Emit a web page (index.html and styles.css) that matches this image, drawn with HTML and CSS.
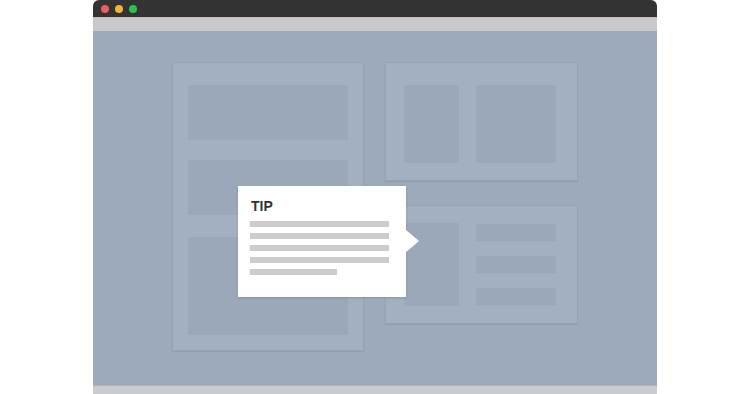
FILE: index.html
```html
<!DOCTYPE html>
<html>
<head>
<meta charset="utf-8">
<link rel="stylesheet" href="styles.css">
</head>
<body>
<div class="window">
  <div class="titlebar">
    <span class="dot red"></span>
    <span class="dot yellow"></span>
    <span class="dot green"></span>
  </div>
  <div class="toolbar"></div>
  <div class="content">
    <div class="grid">
      <div class="card card-left">
        <div class="block b1"></div>
        <div class="block b2"></div>
        <div class="block b3"></div>
      </div>
      <div class="right">
        <div class="card card-rt">
          <div class="block narrow"></div>
          <div class="block wide"></div>
        </div>
        <div class="card card-rb">
          <div class="block narrow"></div>
          <div class="rows">
            <div class="block row"></div>
            <div class="block row"></div>
            <div class="block row"></div>
          </div>
        </div>
      </div>
    </div>
    <div class="tip">
      <div class="tip-title">TIP</div>
      <div class="lines">
        <div class="line"></div>
        <div class="line"></div>
        <div class="line"></div>
        <div class="line"></div>
        <div class="line short"></div>
      </div>
      <div class="arrow"></div>
    </div>
  </div>
  <div class="footer"></div>
</div>
</body>
</html>
```

FILE: styles.css
```css
html, body {
  margin: 0;
  padding: 0;
  background: #ffffff;
  font-family: "Liberation Sans", Arial, sans-serif;
}
.window {
  margin-left: 93px;
  width: 564px;
  height: 394px;
  display: flex;
  flex-direction: column;
}
.titlebar {
  height: 17px;
  background: #333333;
  border-radius: 6px 6px 0 0;
  display: flex;
  align-items: center;
  padding-left: 8px;
  gap: 6px;
}
.dot {
  width: 8px;
  height: 8px;
  border-radius: 50%;
}
.red { background: #f25c5c; }
.yellow { background: #f5b433; }
.green { background: #2fc24a; }
.toolbar {
  height: 14px;
  background: #c9c9c9;
  border-top: 1px solid #bdbdbd;
  box-sizing: border-box;
}
.content {
  position: relative;
  flex: 1;
  background: #9caabb;
  padding: 31px 0 0 79px;
}
.footer {
  height: 9px;
  background: #cbcbcb;
  border-top: 1px solid #b3b3b3;
  box-sizing: border-box;
}
.grid {
  display: flex;
  gap: 21px;
}
.card {
  background: #a2b0c1;
  border: 1px solid #95a3b4;
  box-sizing: border-box;
  box-shadow: 0 1px 1px rgba(80, 95, 115, 0.15);
}
.block {
  background: #9aa8b9;
}
.card-left {
  width: 192px;
  height: 289px;
  padding: 22px 15px 15px;
  display: flex;
  flex-direction: column;
}
.b1 { height: 55px; }
.b2 { height: 55px; margin-top: 20px; }
.b3 { height: 98px; margin-top: 22px; }
.right {
  display: flex;
  flex-direction: column;
  gap: 24px;
}
.card-rt, .card-rb {
  width: 193px;
  height: 119px;
  display: flex;
  gap: 17px;
  padding: 22px 21px 17px 18px;
}
.card-rb {
  padding-top: 17px;
}
.narrow { width: 55px; }
.wide { flex: 1; }
.rows {
  flex: 1;
  display: flex;
  flex-direction: column;
  gap: 15px;
  padding-top: 1px;
}
.row { height: 17px; }
.tip {
  position: absolute;
  left: 145px;
  top: 155px;
  width: 168px;
  height: 111px;
  box-sizing: border-box;
  background: #ffffff;
  padding: 12px 17px 0 12px;
  box-shadow: 0 1px 2px rgba(60, 70, 90, 0.25);
}
.tip-title {
  font-size: 14px;
  font-weight: bold;
  color: #333333;
  line-height: 16px;
  padding-left: 1px;
}
.lines {
  margin-top: 7px;
  display: flex;
  flex-direction: column;
  gap: 6px;
}
.line {
  height: 6px;
  background: #cccccc;
}
.line.short { width: 87px; }
.arrow {
  position: absolute;
  right: -13px;
  top: 44px;
  width: 0;
  height: 0;
  border-top: 11px solid transparent;
  border-bottom: 11px solid transparent;
  border-left: 13px solid #ffffff;
}
```
